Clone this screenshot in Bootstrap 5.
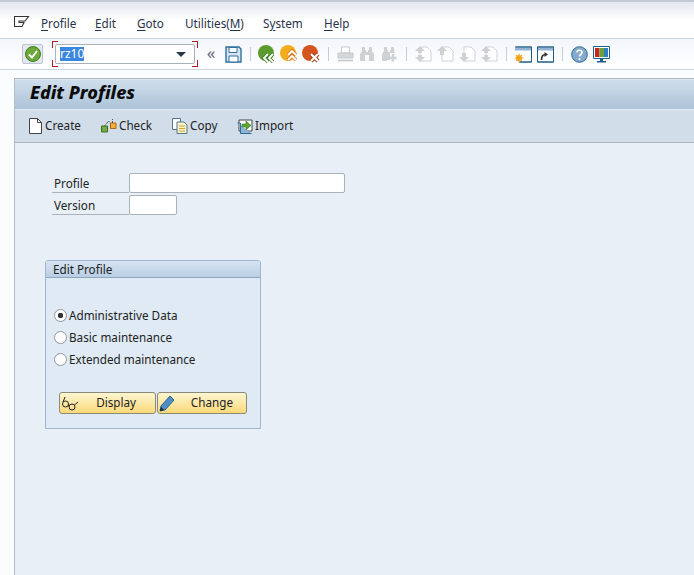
<!DOCTYPE html>
<html lang="en">
<head>
<meta charset="UTF-8">
<meta name="viewport" content="width=device-width, initial-scale=1.0">
<title>Edit Profiles</title>
<link href="https://cdn.jsdelivr.net/npm/bootstrap@5.3.0/dist/css/bootstrap.min.css" rel="stylesheet">
<style>
html, body { height: 100%; overflow: hidden; }
body { font-family: "Noto Sans", "DejaVu Sans", sans-serif; font-size: 11.7px; color: #1f2a36; background: #fbfcfe; }
.menu-strip { height: 39px; padding: 6px 0 0 14px; border-bottom: 1px solid #ccd3dc; border-top: 2px solid #c3cad5; background: linear-gradient(#e3e7ef, #ffffff 50%); }
.menu-strip svg { margin-top: -4px; margin-right: 11px; }
.menu-item { color: #27324a; line-height: 16px; }
.menu-item u { text-underline-offset: 2px; }
.tool-strip { height: 31px; padding-left: 22px; border-bottom: 1px solid #ccd3dc; background: linear-gradient(#f3f6fa, #ffffff); }
.ok-btn { width: 21px; height: 20px; background: #e3e9ef; border: 1px solid #bcc5ce; border-radius: 2px; margin-right: 9px; }
.cmd-wrap { width: 146px; height: 26px; padding: 3px; position: relative; }
.cmd-wrap i { position: absolute; width: 6px; height: 7px; border: 1px solid #b21d2a; }
.cmd-wrap i:nth-child(1) { left: 0; top: 0; border-right: 0; border-bottom: 0; }
.cmd-wrap i:nth-child(2) { right: 0; top: 0; border-left: 0; border-bottom: 0; }
.cmd-wrap i:nth-child(3) { left: 0; bottom: 0; border-right: 0; border-top: 0; }
.cmd-wrap i:nth-child(4) { right: 0; bottom: 0; border-left: 0; border-top: 0; }
.cmd-box { height: 20px; background: #fff; border: 1px solid #a9b2bb; border-radius: 2px; padding: 0 8px 0 4px; font-size: 12px; }
.cmd-box span { background: #3b86de; color: #fff; line-height: 14px; }
.cmd-arrow { width: 0; height: 0; border-left: 5px solid transparent; border-right: 5px solid transparent; border-top: 5px solid #26384c; }
.tb-cell { width: 22px; height: 22px; }
.tb-wide { width: 22px; height: 22px; color: #667; font-size: 17px; line-height: 19px; text-align: center; margin-left: 2px; }
.tb-sep { width: 1px; height: 14px; background: #c3ccd5; margin: 0 5px 0 6px; }
.work-area { margin: 8px 0 0 14px; border-left: 1px solid #b4bec9; border-top: 1px solid #a9b5c1; background: #e8eff7; }
.title-bar { height: 30px; padding: 0 0 0 15px; background: linear-gradient(#cfdeeb, #adc3d9); border-top: 1px solid #dfe8f0; }
.title-bar h1 { font-size: 18px; font-weight: 800; font-style: italic; color: #0c0c0c; margin: 0; line-height: 24px; font-family: "Noto Sans", sans-serif; }
.action-bar { height: 34px; padding-left: 14px; background: #d1deea; border-top: 1px solid #e7edf3; border-bottom: 1px solid #a9b5c1; }
.action-item { gap: 2px; color: #222; }
.form-zone { padding: 30px 0 0 37px; }
.field-row { display: flex; align-items: flex-end; margin-bottom: 2px; }
.field-row label { width: 77px; padding-left: 2px; border-bottom: 1px solid #a9b3bd; line-height: 18px; margin: 0; color: #222; }
.field-row .form-control { height: 20px; min-height: 0; padding: 0 3px; border: 1px solid #aab2b9; border-radius: 2px; font-size: 12px; box-shadow: none; }
.field-long { width: 216px; }
.field-short { width: 48px; }
.group-box { width: 216px; height: 169px; margin: 45px 0 0 -7px; background: #dfeaf4; border: 1px solid #9fb6cd; border-radius: 3px 3px 0 0; }
.group-box .card-header { height: 17px; padding: 0 7px; line-height: 16px; background: linear-gradient(#d6e4f1, #b9cfe5); border-bottom: 1px solid #8ea6bd; border-radius: 2px 2px 0 0; color: #222; }
.group-box .card-body { padding: 26px 8px 0 8px; }
.group-box .form-check { display: flex; align-items: center; min-height: 0; height: 22px; margin: 0; padding: 0; gap: 2px; color: #222; }
.group-box .form-check-input { width: 13px; height: 13px; margin: 0; float: none; border: 1px solid #8f979f; background-color: #fff; }
.group-box .form-check-input:checked { background-color: #fff; border-color: #8f979f; background-image: radial-gradient(circle, #333 0 2.5px, transparent 3px); }
.group-box .form-check-label { line-height: 16px; }
.sel-btn { height: 22px; padding: 0 10px 0 1px; font-size: 11.7px; color: #222; background: linear-gradient(#fdf6d2, #fbd978); border: 1px solid #8a8a78; border-radius: 3px; }
.sel-display { width: 97px; }
.sel-change { width: 90px; }
</style>
</head>
<body class="d-flex flex-column">

<div class="menu-strip d-flex align-items-center">
  <svg width="16" height="13" viewBox="0 0 16 13" class="flex-shrink-0"><path d="M.5 1.500h14l-3.500 4.500H5v1.500h5L8 11.500H.5z" fill="none" stroke="#333" stroke-width="1.100"/></svg>
  <div class="d-flex menu-item">
    <span style="width:54px"><u>P</u>rofile</span>
    <span style="width:42px"><u>E</u>dit</span>
    <span style="width:48px"><u>G</u>oto</span>
    <span style="width:78px">Utilities(<u>M</u>)</span>
    <span style="width:61px">S<u>y</u>stem</span>
    <span><u>H</u>elp</span>
  </div>
</div>

<div class="tool-strip d-flex align-items-center">
  <div class="ok-btn d-flex align-items-center justify-content-center">
    <svg width="16" height="16" viewBox="0 0 16 16"><circle cx="8" cy="8" r="7.5" fill="#6aa93a" stroke="#3f7d24"/><path d="M4 8.5l3 3 5-6.5" fill="none" stroke="#fff" stroke-width="2"/></svg>
  </div>
  <div class="cmd-wrap flex-shrink-0">
    <i></i><i></i><i></i><i></i>
    <div class="cmd-box d-flex align-items-center justify-content-between"><span>rz10</span><div class="cmd-arrow"></div></div>
  </div>
  <div class="tb-wide">«</div>
  <div class="tb-cell d-flex align-items-center justify-content-center">
    <svg width="17" height="17" viewBox="0 0 17 17"><path d="M1 1h13l2 2v13H1z" fill="#d7e5f2" stroke="#2f6f9f" stroke-width="1.4"/><path d="M4 1.5h8v5H4zM4 10h9v6H4z" fill="#fff" stroke="#2f6f9f"/></svg>
  </div>
  <div class="tb-sep"></div>
  <div class="tb-cell d-flex align-items-center justify-content-center">
    <svg width="18" height="18" viewBox="0 0 18 18"><circle cx="8" cy="8" r="8" fill="#5c9c2e"/><path d="M10 9l-4 4 4 4M15 9l-4 4 4 4" fill="none" stroke="#3f7d24" stroke-width="3.400"/><path d="M10 9l-4 4 4 4M15 9l-4 4 4 4" fill="none" stroke="#fff" stroke-width="1.800"/></svg>
  </div>
  <div class="tb-cell d-flex align-items-center justify-content-center">
    <svg width="18" height="18" viewBox="0 0 18 18"><circle cx="8" cy="8" r="8" fill="#f3ac1c"/><path d="M8 10l4-4 4 4M8 15l4-4 4 4" fill="none" stroke="#d8761a" stroke-width="3.400"/><path d="M8 10l4-4 4 4M8 15l4-4 4 4" fill="none" stroke="#fff" stroke-width="1.800"/></svg>
  </div>
  <div class="tb-cell d-flex align-items-center justify-content-center">
    <svg width="18" height="18" viewBox="0 0 18 18"><circle cx="8" cy="8" r="8" fill="#d4561f"/><path d="M9 9l7 7M16 9l-7 7" stroke="#a83c12" stroke-width="4"/><path d="M9 9l7 7M16 9l-7 7" stroke="#fff" stroke-width="2.200"/></svg>
  </div>
  <div class="tb-sep"></div>
  <div class="tb-cell d-flex align-items-center justify-content-center">
    <svg width="17" height="16" viewBox="0 0 17 16"><path d="M4.500 1h8v6h-8z" fill="#fff" stroke="#c6c9cc"/><path d="M1 7h15v5H1z" fill="#d6d9dc" stroke="#c6c9cc"/><path d="M1 14.500h15" stroke="#c6c9cc" stroke-width="1.600"/></svg>
  </div>
  <div class="tb-cell d-flex align-items-center justify-content-center">
    <svg width="16" height="16" viewBox="0 0 16 16" fill="#cfd2d5"><path d="M3 1h3v3h1v2h2V4h1V1h3v4l2 3v7H10V9H6v6H1V8l2-3z"/></svg>
  </div>
  <div class="tb-cell d-flex align-items-center justify-content-center">
    <svg width="16" height="16" viewBox="0 0 16 16" fill="#cfd2d5"><path d="M3 1h3v3h1v2h2V4h1V1h3v4l1 2H9v7H6V9H6v6H1V8l2-3z"/><path d="M12 8v7.500M8 12h7.500" stroke="#cfd2d5" stroke-width="2.600"/></svg>
  </div>
  <div class="tb-sep"></div>
  <div class="tb-cell d-flex align-items-center justify-content-center">
    <svg width="17" height="16" viewBox="0 0 17 16"><path d="M5 1h7l4 4v10H5z" fill="#fff" stroke="#cfd2d5"/><path d="M5 0L0 5h3v2h4V5h3zM5 16l-5-5h3V9h4v2h3z" fill="#cfd2d5"/></svg>
  </div>
  <div class="tb-cell d-flex align-items-center justify-content-center">
    <svg width="17" height="16" viewBox="0 0 17 16"><path d="M5 1h7l4 4v10H5z" fill="#fff" stroke="#cfd2d5"/><path d="M5 0L0 5h3v4h4V5h3z" fill="#cfd2d5"/></svg>
  </div>
  <div class="tb-cell d-flex align-items-center justify-content-center">
    <svg width="17" height="16" viewBox="0 0 17 16"><path d="M5 1h7l4 4v10H5z" fill="#fff" stroke="#cfd2d5"/><path d="M5 16l-5-5h3V7h4v4h3z" fill="#cfd2d5"/></svg>
  </div>
  <div class="tb-cell d-flex align-items-center justify-content-center">
    <svg width="17" height="16" viewBox="0 0 17 16"><path d="M5 1h7l4 4v10H5z" fill="#fff" stroke="#cfd2d5"/><path d="M5 0L0 5h3v2h4V5h3zM5 16l-5-5h3V9h4v2h3z" fill="#cfd2d5"/></svg>
  </div>
  <div class="tb-sep"></div>
  <div class="tb-cell d-flex align-items-center justify-content-center">
    <svg width="17" height="17" viewBox="0 0 17 17"><path d="M.5 1h16v15H4" fill="#fff" stroke="#1f5f85"/><path d="M0 .5h17v4H0z" fill="#92b2d2"/><path d="M.5 1h16v15H5" fill="none" stroke="#1f5f85"/><circle cx="4" cy="12" r="3" fill="#f5a21c"/><path d="M4 7.500v9M-.5 12h9M1 9l6 6M7 9l-6 6" stroke="#f5a21c"/></svg>
  </div>
  <div class="tb-cell d-flex align-items-center justify-content-center">
    <svg width="17" height="17" viewBox="0 0 17 17"><path d="M.5 1h16v15H.5z" fill="#fff" stroke="#1f5f85"/><path d="M0 .5h17v4H0z" fill="#92b2d2"/><path d="M.5 1h16v15H.5z" fill="none" stroke="#1f5f85"/><path d="M4.500 14c0-4 1.500-5.500 4-5.500" fill="none" stroke="#333" stroke-width="1.700"/><path d="M7.500 6l3.500 2.500L7.500 11z" fill="#333"/></svg>
  </div>
  <div class="tb-sep"></div>
  <div class="tb-cell d-flex align-items-center justify-content-center">
    <svg width="17" height="17" viewBox="0 0 17 17"><circle cx="8.500" cy="8.500" r="7.800" fill="#86aacb" stroke="#2c6a96"/><path d="M6 6.500c0-3 5-3 5 0 0 2-2.500 2-2.500 4" fill="none" stroke="#fff" stroke-width="1.700"/><circle cx="8.500" cy="13" r="1.100" fill="#fff"/></svg>
  </div>
  <div class="tb-cell d-flex align-items-center justify-content-center">
    <svg width="17" height="17" viewBox="0 0 17 17"><path d="M.5.500h16v12H.5z" fill="#fff" stroke="#1f5f85"/><path d="M2 2h4.500v9H2z" fill="#c9241f"/><path d="M6.500 2H11v9H6.500z" fill="#6aa33a"/><path d="M11 2h4v9h-4z" fill="#2f7fc1"/><path d="M7 13h3v2H7zM4 15h9v1.500H4z" fill="#1f5f85"/></svg>
  </div>
</div>

<div class="work-area flex-grow-1">
  <div class="title-bar"><h1>Edit Profiles</h1></div>
  <div class="action-bar d-flex align-items-center">
    <div class="action-item d-flex align-items-center" style="width:72px">
      <svg width="14" height="16" viewBox="0 0 14 16"><path d="M.5.500h8l4 4v11H.5z" fill="#fff" stroke="#444"/><path d="M8.500.500v4h4" fill="none" stroke="#444"/></svg>
      <span>Create</span>
    </div>
    <div class="action-item d-flex align-items-center" style="width:71px">
      <svg width="16" height="15" viewBox="0 0 16 15"><path d="M.5 8h6v6h-6z" fill="#74ad46" stroke="#3c6f23"/><path d="M9.500 5h5.500v5.500H9.500z" fill="#f3ae3c" stroke="#a8691b"/><path d="M3.500 8l4-5 2 2M11.500 5V1" fill="none" stroke="#555" stroke-dasharray="2 1"/></svg>
      <span>Check</span>
    </div>
    <div class="action-item d-flex align-items-center" style="width:65px">
      <svg width="16" height="16" viewBox="0 0 16 16"><path d="M.5.500h8v11h-8z" fill="#fff" stroke="#4e7592"/><path d="M5 4h7l3 3v8.500H5z" fill="#fdf3c9" stroke="#4e7592"/><path d="M7 8h6M7 10.500h6M7 13h6" stroke="#c9a53a"/></svg>
      <span>Copy</span>
    </div>
    <div class="action-item d-flex align-items-center">
      <svg width="16" height="16" viewBox="0 0 16 16"><path d="M2 2h13v11H2z" fill="#fff" stroke="#444"/><path d="M.5 5h3v10.500h11" fill="#8db5d8" stroke="#2c6a96"/><path d="M5 6h4V3l5 4.500L9 12V9H5z" fill="#5ba632" stroke="#38751c" stroke-width=".6"/></svg>
      <span>Import</span>
    </div>
  </div>
  <div class="form-zone">
    <div class="field-row">
      <label for="profile">Profile</label>
      <input id="profile" type="text" class="form-control field-long">
    </div>
    <div class="field-row">
      <label for="version">Version</label>
      <input id="version" type="text" class="form-control field-short">
    </div>
    <div class="card group-box">
      <div class="card-header">Edit Profile</div>
      <div class="card-body">
        <div class="form-check">
          <input class="form-check-input" type="radio" name="mode" id="m1" checked>
          <label class="form-check-label" for="m1">Administrative Data</label>
        </div>
        <div class="form-check">
          <input class="form-check-input" type="radio" name="mode" id="m2">
          <label class="form-check-label" for="m2">Basic maintenance</label>
        </div>
        <div class="form-check">
          <input class="form-check-input" type="radio" name="mode" id="m3">
          <label class="form-check-label" for="m3">Extended maintenance</label>
        </div>
        <div class="d-flex" style="margin:22px 0 0 5px;gap:1px">
          <button type="button" class="btn sel-btn sel-display d-flex align-items-center justify-content-between">
            <svg width="18" height="15" viewBox="0 0 18 15"><circle cx="4.500" cy="8" r="3" fill="none" stroke="#222"/><circle cx="11" cy="11" r="3" fill="none" stroke="#222"/><path d="M7 9.500l1.500.5M2 6l2-5M13.500 9L17 6" fill="none" stroke="#222"/></svg>
            <span style="margin-right:9px">Display</span>
          </button>
          <button type="button" class="btn sel-btn sel-change d-flex align-items-center justify-content-between">
            <svg width="16" height="17" viewBox="0 0 16 17"><path d="M1 16l1-5L11 1l4 4-9 10z" fill="#4f8fc6" stroke="#2b5f8e"/><path d="M1 16l1-4 3 3z" fill="#222"/></svg>
            <span style="margin-right:3px">Change</span>
          </button>
        </div>
      </div>
    </div>
  </div>
</div>

<script src="https://cdn.jsdelivr.net/npm/bootstrap@5.3.0/dist/js/bootstrap.bundle.min.js"></script>
</body>
</html>
